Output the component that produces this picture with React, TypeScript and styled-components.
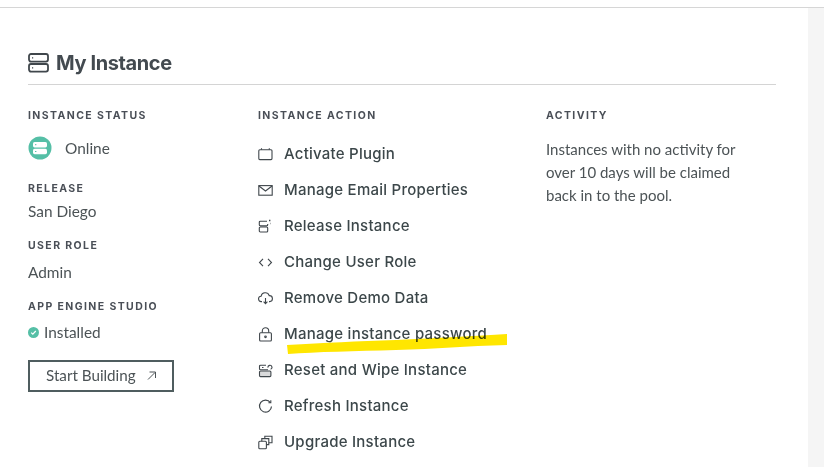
import React from 'react';
import styled, { createGlobalStyle } from 'styled-components';

const GlobalStyle = createGlobalStyle`
  html, body { margin: 0; padding: 0; background: #fff; }
  body { overflow: hidden; }
`;

const Page = styled.div`
  position: relative;
  width: 824px;
  height: 467px;
  overflow: hidden;
  display: flex;
  padding-top: 7px;
  box-sizing: border-box;
  background: #fff;
  &::before {
    content: "";
    position: absolute;
    top: 7px;
    left: 0;
    right: 0;
    height: 1px;
    background: #d6d6d6;
  }
`;

const Main = styled.main`
  width: 808px;
  box-sizing: border-box;
  padding: 35px 32px 0 28px;
`;

const Side = styled.aside`
  flex: 1;
  margin-top: 1px;
  background: #f5f5f5;
`;

const Header = styled.header`
  display: flex;
  align-items: center;
  gap: 7px;
  height: 41px;
  border-bottom: 1px solid #d4d4d4;
  padding-bottom: 1px;
`;

const Title = styled.h1`
  margin: 0;
  font: 700 20px/24px Inter, sans-serif;
  letter-spacing: -0.4px;
  color: #434a50;
`;

const Columns = styled.div`
  display: grid;
  grid-template-columns: 230px 288px 1fr;
  padding-top: 24px;
`;

const Column = styled.section`
  display: flex;
  flex-direction: column;
  align-items: flex-start;
`;

const Label = styled.h2<{ $top?: number }>`
  margin: ${p => p.$top ?? 0}px 0 0;
  font: 700 10.5px/14px Inter, sans-serif;
  letter-spacing: 1.4px;
  color: #4a4f57;
  text-transform: uppercase;
`;

const Value = styled.div<{ $top?: number }>`
  margin-top: ${p => p.$top ?? 0}px;
  font: 400 15.4px/20px Lato, sans-serif;
  color: #4c5356;
`;

const StatusRow = styled.div`
  display: flex;
  align-items: center;
  gap: 13px;
  margin-top: 13px;
  font: 400 15.4px/24px Lato, sans-serif;
  color: #4c5356;
`;

const InstalledRow = styled.div`
  display: flex;
  align-items: center;
  gap: 5px;
  margin-top: 8px;
  font: 400 15.4px/20px Lato, sans-serif;
  color: #4c5356;
`;

const StartButton = styled.button`
  display: flex;
  align-items: center;
  gap: 10px;
  width: 146px;
  height: 32px;
  margin-top: 18px;
  padding: 0 0 2px 16px;
  box-sizing: border-box;
  background: #fff;
  border: 2px solid #4f5d5f;
  font: 400 15.2px/20px Lato, sans-serif;
  color: #4c5356;
`;

const ActionList = styled.ul`
  list-style: none;
  margin: 13px 0 0;
  padding: 0;
`;

const ActionRow = styled.li`
  position: relative;
  display: flex;
  align-items: center;
  height: 36px;
  font: 500 15px/20px Inter, sans-serif;
  letter-spacing: 0.25px;
  color: #3c474a;
`;

const ActionIcon = styled.span`
  display: flex;
  align-items: center;
  width: 26px;
  flex: none;
  color: #40474c;
`;

const Highlight = styled.svg`
  position: absolute;
  left: 28px;
  top: 17px;
  width: 222px;
  height: 22px;
  pointer-events: none;
  mix-blend-mode: multiply;
`;

const Note = styled.p`
  margin: 15px 0 0;
  width: 210px;
  font: 400 15px/23px Lato, sans-serif;
  color: #4c5356;
`;

const ServerIcon = () => (
  <svg width="21" height="20" viewBox="0 0 21 20" fill="none" stroke="#40474c" strokeWidth="1.8">
    <rect x="1" y="1" width="19" height="7.6" rx="2" />
    <rect x="1" y="11" width="19" height="7.6" rx="2" />
    <path d="M4 4.8h1.2M4 14.8h1.2" strokeWidth="1.2" />
  </svg>
);

const OnlineIcon = () => (
  <svg width="24" height="24" viewBox="0 0 24 24">
    <circle cx="12" cy="12" r="11.5" fill="#55bfa6" />
    <rect x="5" y="6" width="14" height="5.4" rx="1.6" fill="#fff" />
    <rect x="5" y="12.8" width="14" height="5.4" rx="1.6" fill="#fff" />
    <path d="M7 8.7h1.4M7 15.5h1.4" stroke="#55bfa6" strokeWidth="1" />
  </svg>
);

const CheckDot = () => (
  <svg width="11" height="11" viewBox="0 0 11 11">
    <circle cx="5.5" cy="5.5" r="5.5" fill="#55bfa6" />
    <path d="M3.2 5.6l1.6 1.6 3-3.2" fill="none" stroke="#fff" strokeWidth="1.2" />
  </svg>
);

const ArrowOut = () => (
  <svg width="11" height="11" viewBox="0 0 11 11" fill="none" stroke="#4c5356" strokeWidth="1">
    <path d="M2 9.5L9 2.5M3.5 2h6v6" />
  </svg>
);

const Glyph = ({ children }: { children: React.ReactNode }) => (
  <svg width="15" height="15" viewBox="0 0 15 15" fill="none" stroke="currentColor" strokeWidth="1.1">
    {children}
  </svg>
);

const actions: { name: string; icon: React.ReactNode }[] = [
  {
    name: 'Activate Plugin',
    icon: <Glyph><rect x="0.8" y="2.8" width="13.2" height="9.8" rx="1" /><path d="M3.5 2.8V1.2M11.3 2.8V1.2" /></Glyph>,
  },
  {
    name: 'Manage Email Properties',
    icon: <Glyph><rect x="0.8" y="2.6" width="13.4" height="9.6" /><path d="M1 3l6.5 5L14 3" /></Glyph>,
  },
  {
    name: 'Release Instance',
    icon: <Glyph><path d="M9 2.2H2.3a1 1 0 0 0-1 1v2.6a1 1 0 0 0 1 1h6.4a1 1 0 0 0 1-1V5M2.3 8h6.4a1 1 0 0 1 1 1v3a1 1 0 0 1-1 1H2.3a1 1 0 0 1-1-1V9a1 1 0 0 1 1-1z" /><path d="M11 1.5h1.4M12.4 4.5h.4" strokeWidth="1.4" /></Glyph>,
  },
  {
    name: 'Change User Role',
    icon: <Glyph><path d="M5 3.8L1.5 7.5 5 11.2M10 3.8l3.5 3.7-3.5 3.7" /></Glyph>,
  },
  {
    name: 'Remove Demo Data',
    icon: <Glyph><path d="M4 10.6H3.4a2.7 2.7 0 0 1-.3-5.4 4.2 4.2 0 0 1 8.1-.6 3 3 0 0 1 .4 6H11" /><path d="M7.5 7v5.6M5.6 10.6l1.9 2 1.9-2" /></Glyph>,
  },
  {
    name: 'Manage instance password',
    icon: <Glyph><rect x="1.6" y="5.8" width="11.8" height="8.2" rx="1" /><path d="M4.3 5.8V4a3.2 3.2 0 0 1 6.4 0v1.8" /><circle cx="7.5" cy="9.8" r="0.8" /></Glyph>,
  },
  {
    name: 'Reset and Wipe Instance',
    icon: <Glyph><path d="M8 2.2H2.5a1 1 0 0 0-1 1v2.6a1 1 0 0 0 1 1H10" /><rect x="1.5" y="8" width="11.4" height="5.6" rx="1" fill="currentColor" fillOpacity="0.2" /><path d="M10 4.6a2 2 0 1 1 2.6 1.6" /><path d="M4 4.5h1.5" /></Glyph>,
  },
  {
    name: 'Refresh Instance',
    icon: <Glyph><path d="M12.4 3.6A6 6 0 1 0 13.5 7.5" strokeWidth="1.2" /><path d="M12.8 1.2v2.6h-2.4" /></Glyph>,
  },
  {
    name: 'Upgrade Instance',
    icon: <Glyph><rect x="0.8" y="6.2" width="7.6" height="7.6" rx="1" /><path d="M3.8 6.2V3.6h7v6H8.4" /><path d="M6.8 3.6V1.2h7.2v6.6h-3.2" /></Glyph>,
  },
];

export default function App() {
  return (
    <>
      <GlobalStyle />
      <Page>
        <Main>
          <Header>
            <ServerIcon />
            <Title>My Instance</Title>
          </Header>
          <Columns>
            <Column>
              <Label>Instance Status</Label>
              <StatusRow><OnlineIcon />Online</StatusRow>
              <Label $top={22}>Release</Label>
              <Value $top={5}>San Diego</Value>
              <Label $top={18}>User Role</Label>
              <Value $top={9}>Admin</Value>
              <Label $top={18}>App Engine Studio</Label>
              <InstalledRow><CheckDot />Installed</InstalledRow>
              <StartButton>Start Building <ArrowOut /></StartButton>
            </Column>
            <Column>
              <Label>Instance Action</Label>
              <ActionList>
                {actions.map(a => (
                  <ActionRow key={a.name}>
                    <ActionIcon>{a.icon}</ActionIcon>
                    {a.name}
                    {a.name === 'Manage instance password' && (
                      <Highlight viewBox="0 0 222 22">
                        <path d="M1 12 C40 10 70 8 110 7 C150 5 190 3 221 1 L221 12 C180 13 150 16 110 17 C70 18 30 19 2 21 Z" fill="#ffe600" />
                      </Highlight>
                    )}
                  </ActionRow>
                ))}
              </ActionList>
            </Column>
            <Column>
              <Label>Activity</Label>
              <Note>Instances with no activity for over 10 days will be claimed back in to the pool.</Note>
            </Column>
          </Columns>
        </Main>
        <Side />
      </Page>
    </>
  );
}
